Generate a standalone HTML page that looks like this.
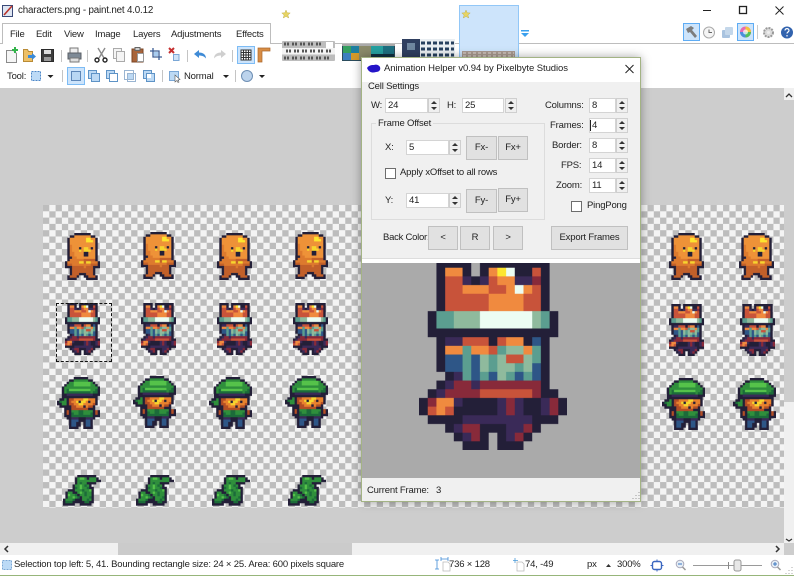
<!DOCTYPE html>
<html><head><meta charset="utf-8"><style>
html,body{margin:0;padding:0;background:#fff}
#r{position:relative;width:794px;height:576px;overflow:hidden;background:#fff;font-family:"Liberation Sans",sans-serif;font-size:9.5px;letter-spacing:-.18px;color:#222;filter:blur(.25px)}
.a,.t,.in,.sp,.b,.c{position:absolute}
.t{white-space:nowrap;line-height:12px}
.in{background:#fff;border:1px solid #d4d4d4;box-sizing:border-box;line-height:13px;padding-left:2px;height:15px}
.sp{background:#efefef;border:1px solid #cfcfcf;box-sizing:border-box;height:15px;width:12px}
.sp:before,.sp:after{content:"";position:absolute;left:2px;border-left:3px solid transparent;border-right:3px solid transparent}
.sp:before{top:2px;border-bottom:3px solid #333}
.sp:after{bottom:2px;border-top:3px solid #333}
.b{background:#e1e1e1;border:1px solid #c0c0c0;box-sizing:border-box;text-align:center;line-height:22px}
.c{background:#fff;border:1px solid #6d6d6d;box-sizing:border-box;width:11px;height:11px}
svg{position:absolute;left:0;top:0}
</style></head><body><div id="r">
<!-- workspace -->
<div class="a" style="left:0;top:88px;width:794px;height:455px;background:#cdcdcd"></div>
<div class="a" id="cv" style="left:43px;top:205px;width:741px;height:303px;overflow:hidden;background:conic-gradient(#f4f4f4 25%,#bdbdbd 0 50%,#f4f4f4 0 75%,#bdbdbd 0);background-size:12.6px 12.6px"></div>
<div class="a" style="left:55.5px;top:302.5px;width:56px;height:59px;border:1px dashed #111;box-sizing:border-box"></div>
<!-- scrollbars -->
<div class="a" style="left:784px;top:88px;width:10px;height:455px;background:#f0f0f0"></div>
<div class="a" style="left:784px;top:100px;width:10px;height:302px;background:#cdcdcd"></div>
<div class="a" style="left:0;top:543px;width:794px;height:12px;background:#f0f0f0"></div>
<div class="a" style="left:118px;top:543px;width:234px;height:12px;background:#cbcbcb"></div>
<div class="a" style="left:784px;top:543px;width:10px;height:12px;background:#cdcdcd"></div>
<div class="a" style="left:0;top:575px;width:794px;height:1px;background:#97b57a"></div>

<svg width="794" height="576" viewBox="0 0 794 576" fill="none">
<!-- title icon -->
<rect x="2" y="5" width="11" height="12" fill="#3a4a78"/><rect x="3" y="6" width="9" height="10" fill="#dfe6f2"/><path d="M4 15L12 6" stroke="#b8342c" stroke-width="1.6"/>
<!-- tab -->
<path d="M0 43.5H2.5V23.5H270.5V43.5H794" stroke="#bdbdbd" stroke-width="1"/>
<rect x="3" y="24" width="267" height="20" fill="#fff"/>
<!-- stars -->
<path d="M286 10l1.2 2.8 3 .2-2.3 2 .8 3-2.7-1.6-2.7 1.6.8-3-2.3-2 3-.2z" fill="#e7d463" stroke="#b9a53a" stroke-width=".4"/>
<!-- selected thumb -->
<rect x="459.5" y="5.5" width="59" height="60" fill="#cde4fb" stroke="#92c7f7"/>
<path d="M466 10l1.2 2.8 3 .2-2.3 2 .8 3-2.7-1.6-2.7 1.6.8-3-2.3-2 3-.2z" fill="#e7d463" stroke="#b9a53a" stroke-width=".4"/>
<rect x="462" y="51" width="53" height="10" fill="#a99a90"/><path d="M463 53h51M463 56h51" stroke="#e6ded8" stroke-dasharray="3 2"/>
<!-- dropdown -->
<path d="M521 30h8v1.500h-8z" fill="#3aa0ee"/><path d="M521 33h8l-4 4z" fill="#3aa0ee"/>
<!-- thumb1 -->
<rect x="282" y="41" width="53" height="20" rx="1" fill="#bdbdbd"/><rect x="282" y="48" width="53" height="6.500" fill="#f4f4f4"/><rect x="326" y="42" width="7" height="6" fill="#fff"/>
<path d="M284 44h5M292 44h5M300 44h5M308 44h5M316 44h5M286 51h5M294 51h5M302 51h5M310 51h5M318 51h5M326 51h5M284 58h5M292 58h5M300 58h5M308 58h5M316 58h5M324 58h5" stroke="#555" stroke-width="3" stroke-dasharray="2 1"/>
<!-- thumb2 -->
<rect x="342" y="44" width="53" height="17" fill="#2b4c5c"/><rect x="343" y="45" width="8" height="8" fill="#35a060"/><rect x="351" y="45" width="8" height="8" fill="#1e7fa0"/><rect x="343" y="53" width="8" height="7" fill="#3c7fc0"/><rect x="351" y="53" width="8" height="7" fill="#d59a2a"/><rect x="359" y="46" width="12" height="14" fill="#8a8a6a"/><rect x="371" y="46" width="12" height="8" fill="#25a0a0"/><rect x="383" y="46" width="11" height="8" fill="#1d6f80"/><rect x="371" y="54" width="23" height="6" fill="#103040"/><rect x="342" y="44" width="53" height="2" fill="#aaa"/>
<!-- thumb3 -->
<rect x="402" y="39" width="53" height="20" fill="#e9eef2"/><rect x="402" y="39" width="18" height="20" fill="#2f3f60"/><path d="M421 43h33M421 49h33M421 55h33" stroke="#26405f" stroke-width="3" stroke-dasharray="4 2"/><rect x="407" y="43" width="8" height="7" fill="#6f87a0"/>
<!-- toolbar row 1 -->
<g stroke-width="1">
<path d="M6.500 50.500h7l3 3v9h-10z" fill="#f5f5f5" stroke="#8a8a8a"/><path d="M14 47h2v2h2v2h-2v2h-2v-2h-2v-2h2z" fill="#32b44a"/>
<path d="M23.500 49.500h4l1 2h4v10h-9z" fill="#eec066" stroke="#b98b35"/><path d="M28 55h4v-2l4 3.500-4 3.500v-2h-4z" fill="#3a8ad8"/>
<rect x="41.500" y="49.500" width="12" height="12" fill="#3d3d3d" stroke="#2a2a2a"/><rect x="44" y="50" width="7" height="4" fill="#ddd"/><rect x="44" y="57" width="7" height="4" fill="#999"/>
<path d="M61.500 50v12M87.500 50v12M187.500 50v12M232.500 50v12M62.500 70v12M162.500 70v12M235.500 70v12" stroke="#c4c4c4"/>
<rect x="70" y="48" width="8" height="5" fill="#eee" stroke="#777"/><rect x="68" y="53" width="13" height="6" fill="#7e8a96" stroke="#5a5f66"/><rect x="70" y="58" width="9" height="4" fill="#dfdfdf" stroke="#777"/>
<path d="M98 48l6 10M105 48l-6 10" stroke="#8a8a8a" stroke-width="1.400"/><circle cx="97" cy="60" r="2" stroke="#222" stroke-width="1.400"/><circle cx="105" cy="60" r="2" stroke="#222" stroke-width="1.400"/>
<rect x="113.500" y="48.500" width="8" height="10" fill="#f4f4f4" stroke="#aaa"/><rect x="116.500" y="51.500" width="8" height="10" fill="#f4f4f4" stroke="#aaa"/>
<rect x="132" y="49" width="11" height="13" fill="#a8643a" stroke="#7a4524"/><rect x="135" y="47.500" width="5" height="3" fill="#ccc" stroke="#666"/><rect x="137.500" y="53.500" width="6" height="8" fill="#fff" stroke="#999"/>
<path d="M150 51h9v9M153 48v9h9" stroke="#3d5f95" stroke-width="1.300"/><rect x="154" y="52" width="4" height="4" fill="#a8cdf0"/>
<path d="M169 48l5 5M174 48l-5 5" stroke="#c52f2f" stroke-width="2"/><rect x="173.500" y="54.500" width="5.500" height="6" fill="#cfe3f7" stroke="#7aa7d6"/>
<path d="M194 54l5-4v2.500c4 0 7 2 7 6-1.500-2-4-3-7-3v2.500z" fill="#3f8bd6"/>
<path d="M226 54l-5-4v2.500c-4 0-7 2-7 6 1.500-2 4-3 7-3v2.500z" fill="#cfcfcf"/>
<rect x="237.500" y="46.500" width="17" height="17" fill="#cde4fb" stroke="#7dbcf5"/><rect x="241" y="50" width="10" height="10" fill="#fff" stroke="#333"/><path d="M243.500 50v10M246 50v10M248.500 50v10M241 52.500h10M241 55h10M241 57.500h10" stroke="#333"/>
<path d="M258 48h12v3h-8v11h-4z" fill="#d88d45" stroke="#aa682c" stroke-width=".7"/>
<!-- row 2 -->
<rect x="31.500" y="71.500" width="9" height="9" fill="#bcdaf6" stroke="#4d87c8" stroke-dasharray="2 1"/>
<path d="M47.500 75h6l-3 3zM223 75h6l-3 3zM259 75h6l-3 3z" fill="#222"/>
<rect x="67.500" y="67.500" width="17" height="17" fill="#cde4fb" stroke="#7dbcf5"/><rect x="71.500" y="71.500" width="9" height="9" fill="#b9d7f3" stroke="#5e87b8"/>
<rect x="88.500" y="70.500" width="8" height="8" fill="#bcd9f4" stroke="#5e93c6"/><rect x="91.500" y="73.500" width="8" height="8" fill="#bcd9f4" stroke="#5e93c6"/>
<rect x="106.500" y="70.500" width="8" height="8" fill="#bcd9f4" stroke="#5e93c6"/><rect x="109.500" y="73.500" width="8" height="8" fill="#fff" stroke="#5e93c6"/>
<rect x="124.500" y="70.500" width="9" height="9" fill="#fff" stroke="#9ab5d2"/><rect x="127.500" y="73.500" width="8" height="8" fill="none" stroke="#9ab5d2"/><rect x="128" y="74" width="5" height="5" fill="#bcd9f4"/>
<rect x="143.500" y="70.500" width="8" height="8" fill="#bcd9f4" stroke="#5e93c6"/><rect x="146.500" y="73.500" width="8" height="8" fill="#bcd9f4" stroke="#5e93c6"/><rect x="147" y="74" width="4" height="4" fill="#fff"/>
<rect x="169.500" y="71.500" width="9" height="9" fill="#bcd9f4" stroke="#7aa7d6"/><path d="M175 75v7l2-1.500 1 2 1-.5-1-2 2-.5z" fill="#fff" stroke="#555" stroke-width=".6"/>
<circle cx="247" cy="76" r="5.500" fill="#bcd3ec" stroke="#6e8fb4"/>
<!-- top right -->
<path d="M703 10.500h8" stroke="#222"/><rect x="739.500" y="6.500" width="7" height="7" stroke="#222" stroke-width="1.300"/><path d="M775.500 6.500l8 8M783.500 6.500l-8 8" stroke="#222"/>
<rect x="683.500" y="23.500" width="16" height="17" fill="#cde4fb" stroke="#5eacf4"/><path d="M686 29l5-3 3 2-2 2 5 6-2 2-5-6-2 1z" fill="#7d7d7d"/>
<circle cx="709" cy="32.500" r="5.500" fill="#f5f5f5" stroke="#a9a9a9"/><path d="M709 29.500v3h3" stroke="#666"/>
<rect x="722" y="30" width="8" height="8" rx="1" fill="#a9c3df"/><rect x="725" y="27" width="8" height="8" rx="1" fill="#c4d7ea"/>
<rect x="737.500" y="23.500" width="16" height="17" fill="#cde4fb" stroke="#5eacf4"/>
<circle cx="745.500" cy="32" r="5.500" fill="#e76ab0"/><path d="M745.500 32V26.500a5.500 5.500 0 0 1 5.500 5.500z" fill="#f4c23c"/><path d="M745.500 32H751a5.500 5.500 0 0 1-5.500 5.500z" fill="#55c05a"/><path d="M745.500 32v5.500A5.500 5.500 0 0 1 740 32z" fill="#4a90dc"/><circle cx="745.500" cy="32" r="2.500" fill="#fff" opacity=".7"/>
<path d="M757.500 25v14" stroke="#ccc"/>
<circle cx="768.500" cy="32.500" r="4.500" fill="#dcdcdc" stroke="#999" stroke-width="2" stroke-dasharray="2 1"/><circle cx="768.500" cy="32.500" r="1.500" fill="#eee"/>
<circle cx="787" cy="32.500" r="6" fill="#3263ae"/><path d="M785 30.500c0-2.500 4-2.500 4 0 0 1.500-2 1.500-2 3M787 35v1.500" stroke="#fff" stroke-width="1.200"/>
<!-- scroll arrows -->
<path d="M786 97l3-3 3 3M786 539l3 2 3-2" stroke="#333" stroke-width="1.300"/>
<path d="M8 546l-3 3 3 3M776 546l3 3-3 3" stroke="#333" stroke-width="1.500"/>
<!-- statusbar icons -->
<rect x="2.500" y="560.500" width="9" height="9" fill="#bcdaf6" stroke="#7aa7d6" stroke-dasharray="2 1"/>
<path d="M437 560v9M435 569h4M435 560h4M441 559h7M441 557v4M448 557v4" stroke="#3f8bd6" stroke-width=".8"/>
<path d="M443 562h5l2 2v7h-7z" fill="#fff" stroke="#bbb" stroke-width=".8"/>
<path d="M515 558v5M513 560.500h5" stroke="#4a9ad8" stroke-width=".8"/><path d="M517 562h5l2 2v7h-7z" fill="#fff" stroke="#bbb" stroke-width=".8"/>
<path d="M606 567l2.500-3 2.500 3z" fill="#333"/>
<rect x="652.500" y="561.500" width="9" height="8" rx="2" stroke="#3a66c0" stroke-width="1.400"/><path d="M657 559.500v2M657 569.500v2M650.500 565.500h2M661.500 565.500h2" stroke="#3a66c0"/>
<circle cx="680" cy="564" r="3.800" fill="#e6eef6" stroke="#aab"/><path d="M682.500 567l3 3" stroke="#999" stroke-width="1.500"/><path d="M678 564h4" stroke="#3c77c0"/>
<circle cx="775" cy="564" r="3.800" fill="#e6eef6" stroke="#aab"/><path d="M777.500 567l3 3" stroke="#999" stroke-width="1.500"/><path d="M773 564h4M775 562v4" stroke="#3c77c0"/>
<path d="M693 565.500h69" stroke="#9a9a9a"/><path d="M728.500 562v7" stroke="#888"/><rect x="734" y="560" width="7" height="11" rx="2" fill="#e8e8e8" stroke="#999"/>
<path d="M792 567v1M792 570v1M792 573v1M789 570v1M789 573v1M786 573v1" stroke="#aaa"/>
</g>
</svg>

<!-- top text -->
<div class="t" style="left:18px;top:5px;font-size:9.8px">characters.png - paint.net 4.0.12</div>
<div class="t" style="left:10px;top:29px">File</div>
<div class="t" style="left:36px;top:29px">Edit</div>
<div class="t" style="left:64px;top:29px">View</div>
<div class="t" style="left:95px;top:29px">Image</div>
<div class="t" style="left:133px;top:29px">Layers</div>
<div class="t" style="left:171px;top:29px">Adjustments</div>
<div class="t" style="left:236px;top:29px">Effects</div>
<div class="t" style="left:7px;top:71px">Tool:</div>
<div class="t" style="left:184px;top:71px">Normal</div>

<!-- status text -->
<div class="t" style="left:14px;top:559px">Selection top left: 5, 41. Bounding rectangle size: 24 × 25. Area: 600 pixels square</div>
<div class="t" style="left:449px;top:559px">736 × 128</div>
<div class="t" style="left:525px;top:559px">74, -49</div>
<div class="t" style="left:587px;top:559px">px</div>
<div class="t" style="left:617px;top:559px">300%</div>

<!-- dialog -->
<div class="a" style="left:361px;top:57px;width:280px;height:445px;background:#f0f0f0;box-sizing:border-box;border:1px solid #a3b384;box-shadow:0 0 9px rgba(0,0,0,.35)"></div>
<div class="a" style="left:362px;top:58px;width:278px;height:24px;background:#fff"></div>
<div class="a" style="left:362px;top:258px;width:278px;height:5px;background:#fff;border-top:1px solid #ddd;box-sizing:border-box"></div>
<div class="a" id="pv" style="left:362px;top:263px;width:278px;height:215px;background:#aaa;overflow:hidden"></div>
<svg width="794" height="576" viewBox="0 0 794 576" fill="none">
<path d="M367 68c2-3 5-3 7-3 2-1 5 0 6 2 1 3-1 5-4 5-3 1-7 1-9-4z" fill="#2414c8"/>
<path d="M625.500 65l8 8M633.500 65l-8 8" stroke="#222"/>
<rect x="371.500" y="123.500" width="173" height="96" stroke="#dcdcdc"/>
<path d="M633 498v1M636 498v1M639 498v1M636 495v1M639 495v1M639 492v1" stroke="#9a9a9a"/>
</svg>
<div class="t" style="left:384px;top:63px;letter-spacing:-.07px">Animation Helper v0.94 by Pixelbyte Studios</div>
<div class="t" style="left:368px;top:81px">Cell Settings</div>
<div class="t" style="left:371px;top:100px">W:</div>
<div class="in" style="left:385px;top:98px;width:43px">24</div><div class="sp" style="left:428px;top:98px"></div>
<div class="t" style="left:447px;top:100px">H:</div>
<div class="in" style="left:462px;top:98px;width:42px">25</div><div class="sp" style="left:505px;top:98px"></div>

<div class="t" style="left:545px;top:100px">Columns:</div>
<div class="in" style="left:589px;top:98px;width:27px">8</div><div class="sp" style="left:616px;top:98px"></div>
<div class="t" style="left:550px;top:120px">Frames:</div>
<div class="in" style="left:589px;top:118px;width:27px">4</div><div class="sp" style="left:616px;top:118px"></div>
<div class="a" style="left:590px;top:120px;width:1px;height:11px;background:#222"></div>
<div class="t" style="left:552px;top:140px">Border:</div>
<div class="in" style="left:589px;top:138px;width:27px">8</div><div class="sp" style="left:616px;top:138px"></div>
<div class="t" style="left:561px;top:160px">FPS:</div>
<div class="in" style="left:589px;top:158px;width:27px">14</div><div class="sp" style="left:616px;top:158px"></div>
<div class="t" style="left:556px;top:180px">Zoom:</div>
<div class="in" style="left:589px;top:178px;width:27px">11</div><div class="sp" style="left:616px;top:178px"></div>
<div class="c" style="left:571px;top:201px"></div>
<div class="t" style="left:587px;top:200px">PingPong</div>

<div class="t" style="left:376px;top:118px;background:#f0f0f0;padding:0 2px">Frame Offset</div>
<div class="t" style="left:385px;top:142px">X:</div>
<div class="in" style="left:406px;top:140px;width:43px">5</div><div class="sp" style="left:449px;top:140px"></div>
<div class="b" style="left:466px;top:136px;width:31px;height:24px">Fx-</div>
<div class="b" style="left:498px;top:136px;width:30px;height:24px">Fx+</div>
<div class="c" style="left:385px;top:168px"></div>
<div class="t" style="left:400px;top:167px">Apply xOffset to all rows</div>
<div class="t" style="left:385px;top:195px">Y:</div>
<div class="in" style="left:406px;top:193px;width:43px">41</div><div class="sp" style="left:449px;top:193px"></div>
<div class="b" style="left:466px;top:189px;width:31px;height:24px">Fy-</div>
<div class="b" style="left:498px;top:188px;width:30px;height:24px">Fy+</div>

<div class="t" style="left:383px;top:232px;letter-spacing:-.25px">Back Color:</div>
<div class="b" style="left:428px;top:226px;width:30px;height:24px">&lt;</div>
<div class="b" style="left:460px;top:226px;width:30px;height:24px">R</div>
<div class="b" style="left:493px;top:226px;width:30px;height:24px">&gt;</div>
<div class="b" style="left:551px;top:226px;width:77px;height:24px">Export Frames</div>
<div class="t" style="left:367px;top:485px">Current Frame:</div>
<div class="t" style="left:436px;top:485px">3</div>

<script>
var pal={D:'#231f38',O:'#f08a3f',R:'#c8533a',P:'#3a2a58',Y:'#fde62f',W:'#ecfdf3',T:'#5b9e90',G:'#8fba9d',B:'#2e5687',M:'#882a3a',
L:'#ee9238',o:'#dd7a2e',r:'#c2602a',y:'#f7d52e',g:'#2f8f3c',l:'#55c24a',d:'#1c6b3a',s:'#e8822e',n:'#b34e26',b:'#2e5687'};
var knight=[
"..DDDD.DDDDDDDD..",
"..DOOD.DOYWDDRD..",
"..DRRPDPROOPPMD..",
"..DRROOORROWORD..",
"..DRRRRROOOORRD..",
"..DRRRRROOOORRD..",
".DTTGGGWWWWWWGTD.",
".DTTGGGWWWWWWGTD.",
".DDDDDDDDDDDDDDD.",
"..DPPRRRDROODBD..",
"..DOOTOORTGGOTD..",
"..DBBTBGTGRRGTD..",
"..DBBTBGTGGTGBD..",
"...DPTBTBGTBTBD..",
"..DPMMPMMMMMMMD..",
".DPMMMMRRRRRRMDD.",
"DMOOPDDDDPMPDDPMD",
"DRORDDDDDPMPDDPMD",
".DDDDPPPPPPPPDDD.",
"...DPMMDDDPPMD...",
"....DPMD.DPMD....",
".....DDD.DDD....."];
var kSmall=knight.map(function(r){return r.slice(1,16)});
var orange=[
"....DDDDDDD....",
"..DDLLLLLLLDD..",
".DLLLLLLLYYLLD.",
".DLLLLLLLYYYLD.",
".DLLLLLLLLLLLD.",
".DoLLLLLLLLLLD.",
".DoLLLDLyyLDLD.",
".DoLLLyLyyyLLD.",
".DooLLLLDDLLLD.",
".DooLLLLDDLLLD.",
".DDooLLLLLLLLD.",
".DoooooorrrrrD.",
"DoooooyyryyoooD",
"DrroooooooorrrD",
"DDDrrrrrorrrDDD",
"..DrrrrrrrrrD..",
"..DrrrrrrrrrD..",
"..DrrrDDDrrrD..",
".DrrrD..DDrrrD.",
".DDDD....DDDDD.",
];
var green=[
".......DDDDDD.....",
".....DDggggggDD...",
"....DgglllllllgD..",
"...DggglllllllggD.",
"..DggggggggggggggD",
"..DgdlllllllllggdD",
"..DgddddddddddgddD",
"..DDPPPPPPPPPPPDDD",
"..DDDDDDDDDDDDDDD.",
".DDgDnnssssyysssD.",
"DdggDnssyDyysDssD.",
"DDggDnnssyyssssnD.",
".DDDDDnnsssDsnnD..",
"...DDDnnnnnnnDDD..",
"...DnDgggddggggDnD",
"...DnDdggddgggdDnD",
"...DDDdddddddddDDD",
"....DDPPPDDDPPPD..",
".....DbbbDDDbbD...",
".....DbbDD.DbbD...",
".....DbbDD.DbbD...",
".....DDDD..DDDD...",
];
var snake=[
"......DDDDDDDD..",
".....DgllgDgggD.",
".....DggggggggDD",
".....DgdggDDDD..",
"....DgglgdgD....",
"....DdglggdDD...",
"..DDDgggdgglD...",
".DggDDglgdggD...",
".DlggdDggdggD...",
".DgglgdDgggdD...",
"DgggdDDDggdgD...",
"DdddDDDDDddDD...",
"DDDDD..DDDDD....",
"................",
];
function spr(parent,map,s,px,x,y){
 var c=document.createElement('canvas'),n=map[0].length,m=map.length;
 c.width=n*s;c.height=m*s;
 c.style.cssText='position:absolute;left:'+x+'px;top:'+y+'px;width:'+(n*px)+'px;height:'+(m*px)+'px';
 var g=c.getContext('2d');
 map.forEach(function(row,j){for(var i=0;i<n;i++){var k=row[i];if(pal[k]){g.fillStyle=pal[k];g.fillRect(i*s,j*s,s,s);}}});
 parent.appendChild(c);
}
var cv=document.getElementById('cv'),pv=document.getElementById('pv');
var P=2.364,ox=43,oy=205;
[[65,233],[141,232],[217,233],[293,232],[669,233],[739,233]].forEach(function(a){spr(cv,orange,3,P,a[0]-ox,a[1]-oy);});
[[65,303],[141,303],[217,303],[293,303],[669,304],[740,304]].forEach(function(a){spr(cv,kSmall,3,P,a[0]-ox,a[1]-oy);});
[[57,377],[133,376],[209,377],[285,376],[662,378],[733,378]].forEach(function(a){spr(cv,green,3,P,a[0]-ox,a[1]-oy);});
[[63,475],[136,475],[212,475],[288,475]].forEach(function(a){spr(cv,snake,3,P,a[0]-ox,a[1]-oy);});
spr(pv,knight,11,8.667,57.3,-4);
</script>
</div></body></html>
